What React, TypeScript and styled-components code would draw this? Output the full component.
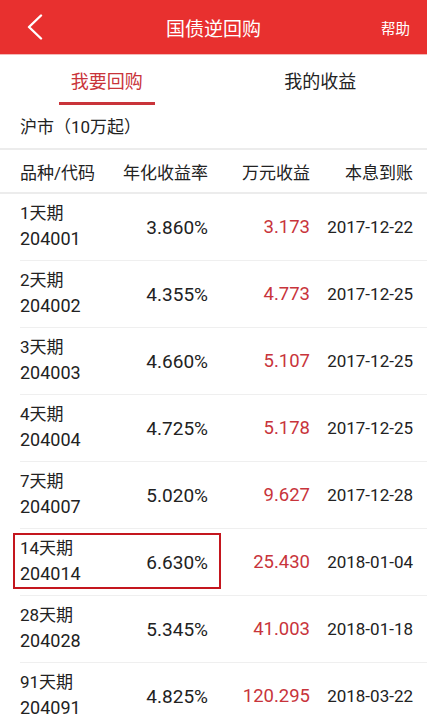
import React from "react";
import styled, { createGlobalStyle } from "styled-components";

const GlobalStyle = createGlobalStyle`
  html, body {
    margin: 0;
    padding: 0;
    background: #fff;
  }
  body {
    font-family: Roboto, "Noto Sans CJK SC", sans-serif;
    color: #222;
  }
`;

const Page = styled.div`
  width: 427px;
  min-height: 719px;
  background: #fff;
  overflow: hidden;
`;

const TopBar = styled.header`
  display: grid;
  grid-template-columns: 80px 1fr 80px;
  align-items: center;
  height: 54px;
  background: #e8302f;
  color: #fff;
`;

const BackButton = styled.div`
  display: flex;
  align-items: center;
  padding-left: 26px;
`;

const Title = styled.div`
  text-align: center;
  font-size: 19px;
`;

const Help = styled.div`
  text-align: right;
  padding-right: 17px;
  font-size: 14.5px;
`;

const Tabs = styled.nav`
  display: grid;
  grid-template-columns: 1fr 1fr;
  height: 50px;
  border-top: 1px solid #f3b9b8;
`;

const Tab = styled.div<{ $active?: boolean }>`
  display: flex;
  justify-content: center;
  align-items: center;
  font-size: 18px;
  color: ${(p) => (p.$active ? "#c9343a" : "#222")};
`;

const TabLabel = styled.span<{ $active?: boolean }>`
  display: flex;
  align-items: center;
  height: 100%;
  padding: 3px 12px 0;
  box-sizing: border-box;
  border-bottom: 3px solid ${(p) => (p.$active ? "#c9343a" : "transparent")};
`;

const Market = styled.div`
  height: 45px;
  display: flex;
  align-items: center;
  padding: 0 0 3px 20px;
  box-sizing: border-box;
  font-size: 17px;
  border-bottom: 2px solid #ececec;
`;

const Grid = styled.div`
  display: grid;
  grid-template-columns: 90px 98px 102px 1fr;
  align-items: center;
  padding: 0 14px 0 20px;
`;

const HeadRow = styled(Grid)`
  height: 42px;
  font-size: 17px;
  color: #333;
  border-bottom: 2px solid #ececec;
`;

const Row = styled(Grid)`
  position: relative;
  height: 66px;
  margin-left: 20px;
  padding-left: 0;
  border-bottom: 1px solid #efefef;
  font-size: 17px;
`;

const Cell = styled.div<{ $align?: "left" | "right"; $red?: boolean; $size?: number }>`
  text-align: ${(p) => p.$align ?? "right"};
  color: ${(p) => (p.$red ? "#c8343b" : "#222")};
  font-size: ${(p) => (p.$size ? `${p.$size}px` : "inherit")};
  white-space: nowrap;
`;

const NameCell = styled.div`
  display: flex;
  flex-direction: column;
  line-height: 26px;
  margin-top: -2px;
`;

const Code = styled.span`
  font-size: 18px;
`;

const Highlight = styled.div`
  position: absolute;
  left: -7px;
  top: 4px;
  width: 208px;
  height: 56px;
  box-sizing: border-box;
  border: 2.5px solid #c4161e;
  pointer-events: none;
`;

type Item = {
  days: string;
  code: string;
  rate: string;
  gain: string;
  date: string;
  marked?: boolean;
};

const items: Item[] = [
  { days: "1天期", code: "204001", rate: "3.860%", gain: "3.173", date: "2017-12-22" },
  { days: "2天期", code: "204002", rate: "4.355%", gain: "4.773", date: "2017-12-25" },
  { days: "3天期", code: "204003", rate: "4.660%", gain: "5.107", date: "2017-12-25" },
  { days: "4天期", code: "204004", rate: "4.725%", gain: "5.178", date: "2017-12-25" },
  { days: "7天期", code: "204007", rate: "5.020%", gain: "9.627", date: "2017-12-28" },
  { days: "14天期", code: "204014", rate: "6.630%", gain: "25.430", date: "2018-01-04", marked: true },
  { days: "28天期", code: "204028", rate: "5.345%", gain: "41.003", date: "2018-01-18" },
  { days: "91天期", code: "204091", rate: "4.825%", gain: "120.295", date: "2018-03-22" },
];

const BackIcon = () => (
  <svg width="18" height="26" viewBox="0 0 18 26" fill="none">
    <path d="M15 1.5 L3 13 L15 24.5" stroke="#fff" strokeWidth="2.4" strokeLinecap="round" strokeLinejoin="round" />
  </svg>
);

const App = () => {
  return (
    <Page>
      <GlobalStyle />
      <TopBar>
        <BackButton>
          <BackIcon />
        </BackButton>
        <Title>国债逆回购</Title>
        <Help>帮助</Help>
      </TopBar>
      <Tabs>
        <Tab $active>
          <TabLabel $active>我要回购</TabLabel>
        </Tab>
        <Tab>
          <TabLabel>我的收益</TabLabel>
        </Tab>
      </Tabs>
      <Market>沪市（10万起）</Market>
      <HeadRow>
        <Cell $align="left">品种/代码</Cell>
        <Cell>年化收益率</Cell>
        <Cell>万元收益</Cell>
        <Cell>本息到账</Cell>
      </HeadRow>
      {items.map((it) => (
        <Row key={it.code}>
          <NameCell>
            <span>{it.days}</span>
            <Code>{it.code}</Code>
          </NameCell>
          <Cell $size={19}>{it.rate}</Cell>
          <Cell $red $size={18.5}>{it.gain}</Cell>
          <Cell>{it.date}</Cell>
          {it.marked && <Highlight />}
        </Row>
      ))}
    </Page>
  );
};

export default App;
